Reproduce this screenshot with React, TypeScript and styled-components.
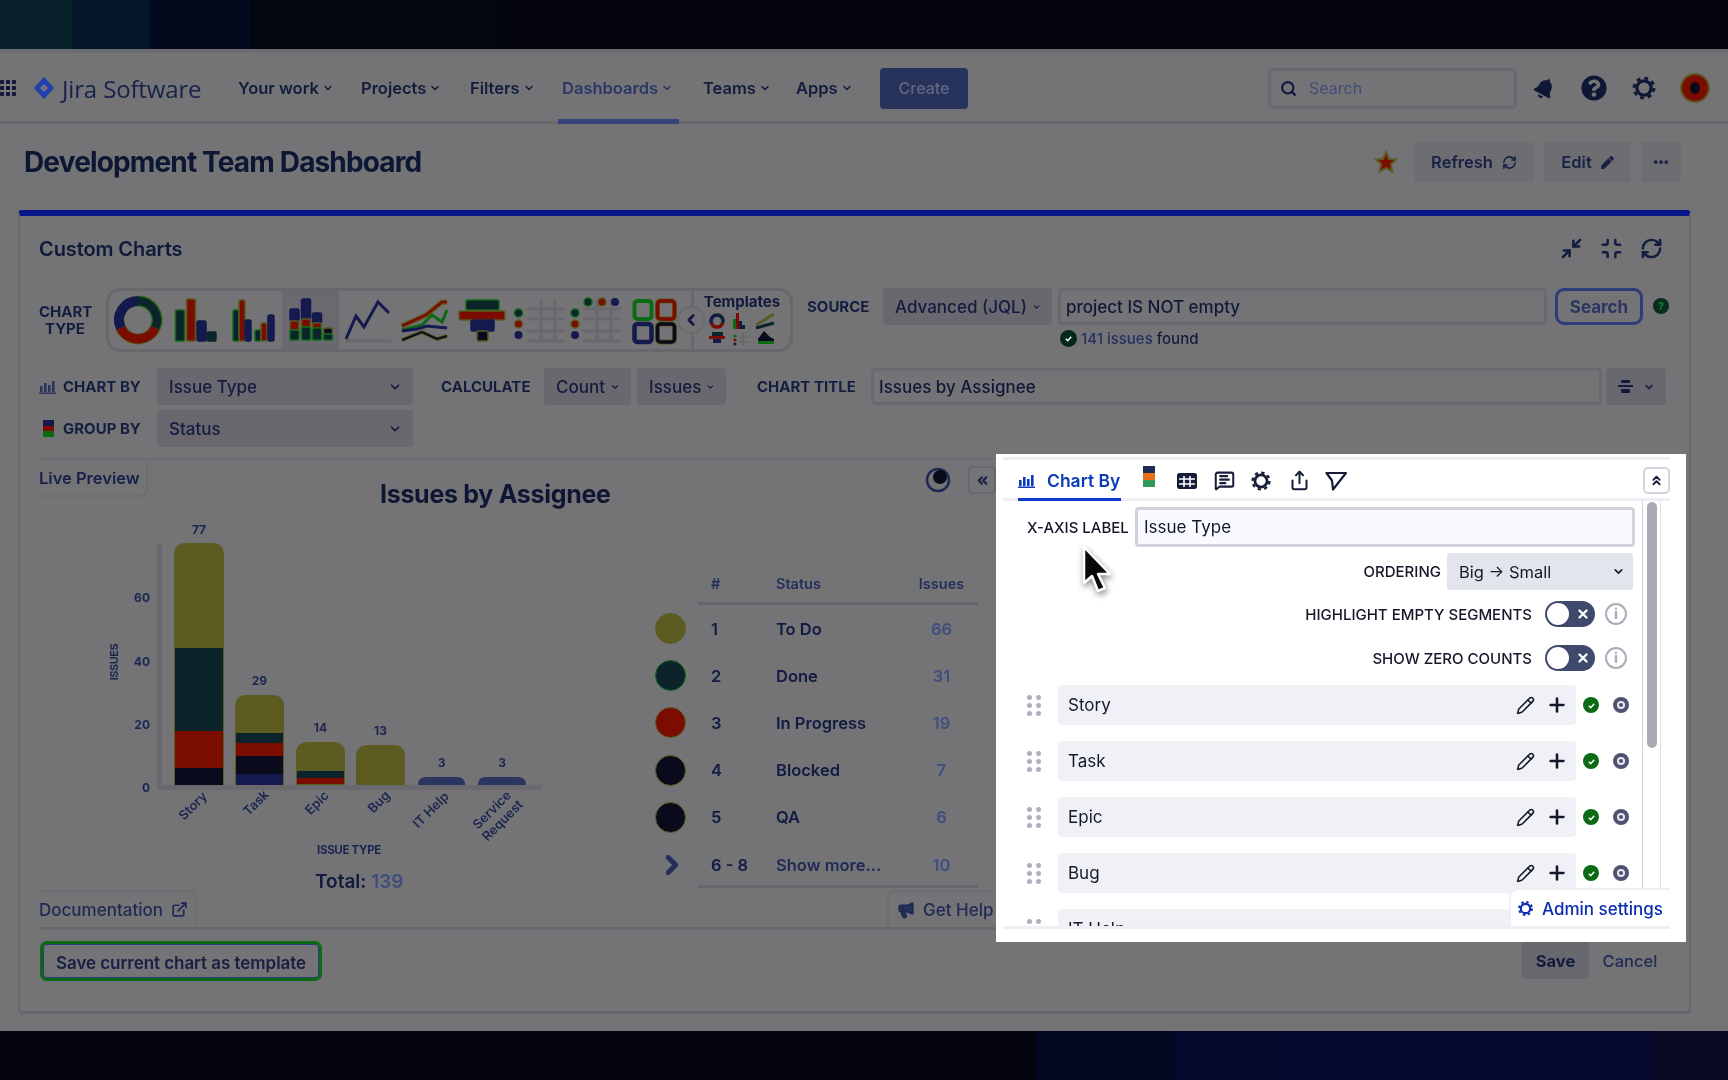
import styled, { createGlobalStyle } from "styled-components";
import {
  ChevronDown,
  ChevronLeft,
  ChevronRight,
  ChevronsLeft,
  ChevronsUp,
  Ellipsis,
  ExternalLink,
  Megaphone,
  Minimize,
  Minimize2,
  MessageSquareText,
  Pencil,
  Plus,
  RefreshCw,
  Search as SearchIcon,
  Share,
  X,
} from "lucide-react";
import { FaBell, FaPen, FaQuestionCircle } from "react-icons/fa";

const RED = "#7a0c00";
const OLIVE = "#5c5b22";
const TEAL = "#0b232b";
const GREEN = "#0b6a12";
const NAVY = "#141a4e";
const INK = "#0a0a1d";

const GlobalStyle = createGlobalStyle`
  html, body { margin: 0; padding: 0; background: #03040f; }
  body { font-family: Inter, "Liberation Sans", sans-serif; color: #121d3d; }
  * { box-sizing: border-box; }
`;

const Page = styled.div`
  position: relative;
  width: 1728px;
  height: 1080px;
  overflow: hidden;
  display: flex;
  flex-direction: column;
`;

const TopBackdrop = styled.div`
  height: 49px;
  background: linear-gradient(90deg, #07202a 0 72px, #06162a 72px 150px, #040a1e 150px 250px, #03060f 250px 500px, #03040f 500px);
`;

const BottomBackdrop = styled.div`
  height: 49px;
  background: linear-gradient(90deg, #04040f 0 1036px, #040820 1036px 1172px, #03092a 1172px 1273px, #03082c 1273px 1654px, #0a0922 1654px);
`;

const Main = styled.div`
  flex: 1;
  background: #747476;
  display: flex;
  flex-direction: column;
  filter: blur(0.45px);
`;

const Header = styled.div`
  height: 75px;
  padding-top: 2px;
  border-top: 4px solid #6b6b70;
  border-bottom: 3px solid #69696d;
  display: flex;
  align-items: center;
  position: relative;
`;

const AppGrid = styled.div`
  width: 16px;
  display: grid;
  grid-template-columns: repeat(3, 4px);
  gap: 2px;
  justify-content: end;
  span { width: 4px; height: 4px; border-radius: 1px; background: #10193a; }
`;

const LogoMark = styled.svg`
  margin-left: 17px;
  width: 22px;
  height: 24px;
`;

const LogoText = styled.span`
  margin-left: 7px;
  width: 176px;
  font-family: "Open Sans", sans-serif;
  font-size: 24px;
  letter-spacing: -0.15px;
  color: #15224a;
`;

const NavItem = styled.div<{ $active?: boolean; $w: number }>`
  width: ${(p) => p.$w}px;
  height: 100%;
  display: flex;
  align-items: center;
  gap: 3px;
  font-size: 16.5px;
  font-weight: 600;
  white-space: nowrap;
  color: ${(p) => (p.$active ? "#2a3768" : "#121d3d")};
  position: relative;
`;

const NavUnderline = styled.div`
  position: absolute;
  left: -4px;
  bottom: -3px;
  width: 121px;
  height: 5px;
  background: #35457a;
`;

const CreateButton = styled.div`
  width: 88px;
  height: 41px;
  border-radius: 4px;
  background: #27335a;
  color: #5f6884;
  font-size: 16px;
  font-weight: 500;
  display: flex;
  align-items: center;
  justify-content: center;
`;

const SearchBox = styled.div`
  margin-left: 300px;
  width: 249px;
  height: 41px;
  border: 3px solid #69696f;
  border-radius: 5px;
  display: flex;
  align-items: center;
  gap: 12px;
  padding-left: 9px;
  font-size: 16px;
  color: #454d7c;
`;

const HeaderIcons = styled.div`
  margin-left: 13px;
  display: flex;
  align-items: center;
  gap: 22px;
`;

const HeaderIconSlot = styled.div`
  width: 28px;
  height: 28px;
  display: flex;
  align-items: center;
  justify-content: center;
`;

const Bell = styled(FaBell)`
  transform: rotate(28deg);
  width: 21px;
  height: 21px;
  color: #0f1736;
`;

const Avatar = styled.div`
  width: 30px;
  height: 30px;
  border-radius: 50%;
  background: ${RED};
  border: 2px solid ${OLIVE};
  display: flex;
  align-items: center;
  justify-content: center;
  &::after {
    content: "";
    width: 10px;
    height: 12px;
    border-radius: 50%;
    background: ${INK};
  }
`;

const TitleBar = styled.div`
  height: 86px;
  padding: 0 47px 10px 24px;
  display: flex;
  align-items: center;
`;

const PageTitle = styled.h1`
  margin: 0;
  flex: 1;
  font-size: 28px;
  font-weight: 700;
  letter-spacing: -0.85px;
  color: #0d1733;
`;

const GhostButton = styled.div<{ $w: number }>`
  width: ${(p) => p.$w}px;
  height: 40px;
  margin-left: 10px;
  border-radius: 4px;
  background: #6e6e72;
  display: flex;
  align-items: center;
  justify-content: center;
  gap: 9px;
  font-size: 16.5px;
  font-weight: 600;
  color: #172146;
`;

const StarWrap = styled.svg`
  width: 24px;
  height: 24px;
  margin-right: 6px;
`;

const Panel = styled.div`
  position: relative;
  margin: 0 37px 0 18px;
  height: 804px;
  border-top: 6px solid #08178a;
  border-left: 2px solid #68686c;
  border-right: 2px solid #68686c;
  border-bottom: 3px solid #66666c;
  border-radius: 4px;
  padding: 0 27px 0 19px;
`;

const PanelHead = styled.div`
  height: 64px;
  display: flex;
  align-items: center;
  justify-content: space-between;
`;

const PanelTitle = styled.div`
  margin-top: 1px;
  font-size: 20px;
  font-weight: 600;
  letter-spacing: -0.1px;
  color: #0f1a3a;
`;

const PanelTools = styled.div`
  display: flex;
  gap: 17px;
  margin-right: -1px;
  color: #131d40;
`;

const BuilderRow = styled.div<{ $top: number; $h: number }>`
  margin-top: ${(p) => p.$top}px;
  height: ${(p) => p.$h}px;
  display: flex;
  align-items: flex-start;
  & > * { flex: none; }
`;

const ChartTypeLabel = styled.div`
  width: 52px;
  margin: 15px 15px 0 0;
  text-align: center;
  font-size: 15px;
  line-height: 17px;
  font-weight: 700;
  color: #131d40;
`;

const Picker = styled.div`
  position: relative;
  width: 687px;
  height: 64px;
  border: 3px solid #68686c;
  border-radius: 14px;
  display: flex;
  overflow: visible;
`;

const PickerCell = styled.div<{ $active?: boolean }>`
  width: 57.5px;
  height: 100%;
  flex: none;
  background: ${(p) => (p.$active ? "#69696f" : "transparent")};
  svg { display: block; }
`;

const PickerBack = styled.div`
  position: absolute;
  left: 568px;
  top: 15px;
  width: 28px;
  height: 28px;
  border-radius: 50%;
  background: #747476;
  border: 2px solid #6c6c70;
  display: flex;
  align-items: center;
  justify-content: center;
  color: #101a3c;
`;

const TemplatesCell = styled.div`
  margin-left: 7px;
  flex: 1;
  border-left: 3px solid #68686c;
  padding-top: 2px;
  text-align: center;
  font-size: 15px;
  line-height: 18px;
  font-weight: 700;
  color: #101a3c;
  svg { display: block; margin: 0 auto; }
`;

const FieldLabel = styled.div<{ $w: number; $ml?: number }>`
  width: ${(p) => p.$w}px;
  margin-left: ${(p) => p.$ml ?? 0}px;
  height: 37px;
  display: flex;
  align-items: center;
  gap: 7px;
  font-size: 15px;
  font-weight: 700;
  white-space: nowrap;
  color: #141e41;
`;

const Select = styled.div<{ $w: number; $ml?: number; $spread?: boolean }>`
  width: ${(p) => p.$w}px;
  margin-left: ${(p) => p.$ml ?? 0}px;
  height: 37px;
  border-radius: 4px;
  background: #68686e;
  padding: 0 11px 0 12px;
  display: flex;
  align-items: center;
  justify-content: ${(p) => (p.$spread ? "space-between" : "flex-start")};
  gap: 5px;
  font-size: 17px;
  font-weight: 500;
  white-space: nowrap;
  color: #141b40;
`;

const SourceColumn = styled.div`
  margin-left: 6px;
  width: 489px;
`;

const TextInput = styled.div<{ $w?: number }>`
  width: ${(p) => (p.$w ? `${p.$w}px` : "100%")};
  height: 37px;
  border: 3px solid #69696e;
  border-radius: 4px;
  padding-left: 5px;
  display: flex;
  align-items: center;
  font-size: 17px;
  font-weight: 500;
  color: #0f1838;
`;

const FoundLine = styled.div`
  margin-top: 4px;
  padding-left: 2px;
  display: flex;
  align-items: center;
  gap: 4px;
  font-size: 15px;
  font-weight: 500;
  color: #121d3d;
  b { font-weight: 500; color: #253160; }
`;

const CheckDot = styled.span<{ $d: number; $bg: string }>`
  width: ${(p) => p.$d}px;
  height: ${(p) => p.$d}px;
  border-radius: 50%;
  flex: none;
  background: ${(p) => p.$bg};
  display: inline-flex;
  align-items: center;
  justify-content: center;
`;

const SearchButton = styled.div`
  margin-left: 8px;
  width: 88px;
  height: 37px;
  border: 3px solid #2e3d7a;
  border-radius: 9px;
  display: flex;
  align-items: center;
  justify-content: center;
  font-size: 17px;
  font-weight: 700;
  color: #2a3560;
`;

const HelpDot = styled.div`
  margin: 10px 0 0 10px;
  width: 16px;
  height: 16px;
  border-radius: 50%;
  background: #0a2a1e;
  color: #0f7a2a;
  font-size: 11px;
  font-weight: 800;
  line-height: 16px;
  text-align: center;
`;

const GroupColumn = styled.div`
  display: flex;
  flex-direction: column;
  gap: 5px;
`;

const GroupRow = styled.div`
  display: flex;
`;

const AlignButton = styled.div`
  margin-left: 4px;
  width: 60px;
  height: 37px;
  border-radius: 4px;
  background: #68686e;
  display: flex;
  align-items: center;
  justify-content: center;
  gap: 10px;
  color: #101a3c;
`;

const Preview = styled.div`
  margin-top: 11px;
  border-top: 2px solid #6c6c70;
  display: flex;
  flex-direction: column;
`;

const PreviewTop = styled.div`
  height: 55px;
  display: flex;
  align-items: flex-start;
`;

const PreviewTab = styled.div`
  width: 109px;
  height: 37px;
  border-right: 2px solid #6e6e72;
  border-bottom: 2px solid #6e6e72;
  border-bottom-right-radius: 8px;
  display: flex;
  align-items: center;
  font-size: 16.5px;
  font-weight: 600;
  color: #16204a;
`;

const ChartHeading = styled.div`
  margin: 19px 0 0 232px;
  width: 500px;
  font-size: 25px;
  line-height: 30px;
  font-weight: 700;
  letter-spacing: -0.3px;
  color: #0d1733;
`;

const MoonIcon = styled.svg`
  margin: 7px 0 0 45px;
  width: 26px;
  height: 26px;
`;

const CollapseLeft = styled.div`
  margin: 6px 0 0 17px;
  width: 28px;
  height: 28px;
  border: 2px solid #68686e;
  border-radius: 5px;
  display: flex;
  align-items: center;
  justify-content: center;
  color: #1a2448;
`;

const PreviewBody = styled.div`
  height: 375px;
  display: flex;
`;

const ChartColumn = styled.div`
  width: 611px;
  padding-left: 60px;
`;

const ChartSvg = styled.svg`
  display: block;
  text { font-family: Inter, "Liberation Sans", sans-serif; }
`;

const TotalLine = styled.div`
  margin: 10px 0 0 216px;
  font-size: 19px;
  font-weight: 600;
  color: #101a3c;
  b { font-weight: 600; color: #3f4e7e; }
`;

const Table = styled.div`
  margin-top: 49px;
  width: 328px;
  height: 324px;
  display: grid;
  grid-template-columns: 48px 78px 129px 73px;
  grid-template-rows: 41px;
  grid-auto-rows: 47.2px;
  font-size: 16.5px;
  font-weight: 600;
  color: #121b42;
`;

const TableHead = styled.div`
  grid-column: 1 / -1;
  height: 41px;
  margin-left: 48px;
  border-bottom: 3px solid #66666c;
  display: grid;
  grid-template-columns: 78px 129px 73px;
  align-items: center;
  font-size: 14.5px;
  color: #242f5a;
`;

const NumCell = styled.div`
  padding-left: 13px;
  display: flex;
  align-items: center;
`;

const NameCell = styled.div`
  display: flex;
  align-items: center;
  white-space: nowrap;
`;

const CountCell = styled.div`
  display: flex;
  align-items: center;
  justify-content: center;
  color: #3f4e7e;
`;

const IssuesHead = styled(CountCell)`
  color: #242f5a;
`;

const ShowMore = styled(NameCell)`
  color: #1f2a54;
`;

const SwatchCell = styled.div`
  display: flex;
  align-items: center;
  padding-left: 5px;
  color: #242f5a;
`;

const MoreChevron = styled(ChevronRight)`
  margin-left: 2px;
`;

const Swatch = styled.span<{ $fill: string; $ring: string }>`
  width: 31px;
  height: 31px;
  border-radius: 50%;
  background: ${(p) => p.$fill};
  border: 1.5px solid ${(p) => p.$ring};
`;

const TableEnd = styled.div`
  grid-column: 1 / -1;
  height: 3px;
  margin: -3px 0 0 48px;
  background: #66666c;
`;

const BottomTabs = styled.div`
  height: 40px;
  border-bottom: 3px solid #68686c;
  display: flex;
  justify-content: space-between;
`;

const BottomTab = styled.div<{ $left?: boolean }>`
  height: 100%;
  width: ${(p) => (p.$left ? 158 : 775)}px;
  padding-left: ${(p) => (p.$left ? 0 : 8)}px;
  border-right: ${(p) => (p.$left ? "2px solid #6e6e72" : "none")};
  border-left: ${(p) => (p.$left ? "none" : "2px solid #6e6e72")};
  border-top: 2px solid #6e6e72;
  border-top-right-radius: ${(p) => (p.$left ? 8 : 0)}px;
  border-top-left-radius: ${(p) => (p.$left ? 0 : 8)}px;
  display: flex;
  align-items: center;
  gap: 8px;
  font-size: 17px;
  font-weight: 500;
  color: #1f2a54;
`;

const Footer = styled.div`
  margin-top: 11px;
  display: flex;
  align-items: flex-start;
`;

const TemplateButton = styled.div`
  margin-left: 1px;
  width: 282px;
  height: 40px;
  padding-top: 3px;
  border: 3px solid ${GREEN};
  box-shadow: inset 0 0 0 1px #2a3a7a;
  border-radius: 7px;
  display: flex;
  align-items: center;
  justify-content: center;
  font-size: 17px;
  font-weight: 600;
  letter-spacing: -0.05px;
  color: #181f45;
`;

const SaveButton = styled.div`
  margin-left: auto;
  width: 67px;
  height: 38px;
  padding-top: 1px;
  border-radius: 4px;
  background: #68686f;
  display: flex;
  align-items: center;
  justify-content: center;
  font-size: 16.5px;
  font-weight: 700;
  color: #121a3c;
`;

const CancelButton = styled.div`
  margin: 0 3px 0 12px;
  width: 58px;
  height: 38px;
  padding-top: 1px;
  display: flex;
  align-items: center;
  justify-content: center;
  font-size: 16.5px;
  font-weight: 500;
  color: #202b52;
`;

/* the white options popup that lies over the dimmed page */
const Popup = styled.div`
  position: absolute;
  left: 976px;
  top: 238px;
  width: 690px;
  height: 488px;
  background: #fff;
  padding: 3px 16px 13px 7px;
  color: #16182a;
`;

const PopupInner = styled.div`
  position: relative;
  height: 100%;
  border-top: 3px solid #eeeef4;
  border-bottom: 3px solid #eeeef4;
  display: flex;
  flex-direction: column;
`;

const TabBar = styled.div`
  height: 41px;
  flex: none;
  border-bottom: 3px solid #eeeef4;
  display: flex;
  align-items: center;
  padding: 3px 0 0 15px;
  color: #161d38;
`;

const ActiveTab = styled.div`
  width: 103px;
  height: 41px;
  margin: -3px 0 -3px;
  padding-top: 3px;
  border-bottom: 3px solid #0b3bc4;
  display: flex;
  align-items: center;
  gap: 12px;
  font-size: 17.5px;
  font-weight: 600;
  white-space: nowrap;
  color: #0b3bb8;
`;

const TabIcon = styled.div<{ $ml: number }>`
  margin-left: ${(p) => p.$ml}px;
  width: 24px;
  height: 24px;
  display: flex;
  align-items: center;
  justify-content: center;
`;

const StackIcon = styled.div`
  margin-left: 22px;
  margin-top: -8px;
  width: 12px;
  height: 21px;
  background: linear-gradient(#1d2d58 0 7px, #e8701a 7px 14px, #2f9a58 14px);
`;

const PopupCollapse = styled.div`
  position: absolute;
  right: 0;
  top: 7px;
  width: 27px;
  height: 27px;
  border: 2px solid #d3d6df;
  border-radius: 5px;
  display: flex;
  align-items: center;
  justify-content: center;
  color: #1a1f38;
`;

const PopupBody = styled.div`
  flex: 1;
  min-height: 0;
  overflow: hidden;
  display: flex;
`;

const PopupContent = styled.div`
  width: 640px;
  padding: 6px 7px 0 24px;
  border-right: 1px solid #cfd2dc;
`;

const ScrollArea = styled.div`
  width: 18px;
  padding: 1px 0 0 4px;
  border-right: 1px solid #dfe1e8;
`;

const ScrollThumb = styled.div`
  width: 10px;
  height: 246px;
  border-radius: 5px;
  background: #a9aab2;
`;

const AxisRow = styled.div`
  display: flex;
  align-items: center;
  justify-content: space-between;
`;

const OptionLabel = styled.span`
  font-size: 15px;
  font-weight: 500;
  white-space: nowrap;
`;

const AxisInput = styled.div`
  width: 500px;
  height: 40px;
  border: 3px solid #d0d3dc;
  border-radius: 4px;
  background: #f8faff;
  padding-left: 6px;
  display: flex;
  align-items: center;
  font-size: 17px;
`;

const OptionRow = styled.div<{ $top: number }>`
  margin-top: ${(p) => p.$top}px;
  display: flex;
  align-items: center;
  justify-content: flex-end;
`;

const OrderSelect = styled.div`
  margin: 0 2px 0 6px;
  width: 186px;
  height: 37px;
  background: #e3e5ec;
  border-radius: 3px;
  padding: 0 8px 0 12px;
  display: flex;
  align-items: center;
  justify-content: space-between;
  font-size: 16.5px;
`;

const Toggle = styled.div`
  margin-left: 13px;
  width: 50px;
  height: 26px;
  border-radius: 13px;
  background: #3e4a6b;
  padding: 2px 5px 2px 2px;
  display: flex;
  align-items: center;
  justify-content: space-between;
  color: #fff;
  &::before {
    content: "";
    width: 22px;
    height: 22px;
    border-radius: 50%;
    background: #fff;
  }
`;

const InfoDot = styled.div`
  margin: 0 8px 0 10px;
  width: 22px;
  height: 22px;
  border-radius: 50%;
  border: 2px solid #a9adb8;
  color: #a9adb8;
  font-size: 14px;
  font-weight: 800;
  line-height: 18px;
  text-align: center;
`;

const ItemRow = styled.div<{ $top: number }>`
  margin: ${(p) => p.$top}px 0 0 -24px;
  height: 40px;
  display: flex;
  align-items: center;
`;

const DragHandle = styled.div`
  margin-left: 23px;
  width: 32px;
  display: grid;
  grid-template-columns: repeat(2, 5px);
  gap: 3px 4px;
  justify-content: start;
  padding-left: 1px;
  span { width: 5px; height: 5px; border-radius: 50%; background: #aeb1bd; }
`;

const ItemBox = styled.div`
  width: 518px;
  height: 100%;
  flex: none;
  border-radius: 4px;
  background: #eff1f6;
  padding: 0 8px 0 10px;
  display: flex;
  align-items: center;
  gap: 11px;
  font-size: 17px;
  color: #16182a;
  span { margin-right: auto; }
`;

const ItemActions = styled.div`
  margin-left: 7px;
  width: 46px;
  display: flex;
  align-items: center;
  justify-content: space-between;
`;

const EyeDot = styled.span`
  width: 16px;
  height: 16px;
  border-radius: 50%;
  background: #4d5470;
  display: inline-flex;
  align-items: center;
  justify-content: center;
  &::after {
    content: "";
    width: 4px;
    height: 4px;
    border-radius: 50%;
    background: #4d5470;
    box-shadow: 0 0 0 2px #e8e9ef;
  }
`;

const AdminBadge = styled.div`
  position: absolute;
  right: 0;
  bottom: 0;
  width: 161px;
  height: 38px;
  padding: 1px 0 0 6px;
  background: #fff;
  border-top: 2px solid #eeeef4;
  border-left: 2px solid #eeeef4;
  border-top-left-radius: 8px;
  display: flex;
  align-items: center;
  gap: 8px;
  font-size: 17px;
  font-weight: 500;
  white-space: nowrap;
  color: #0b2bb0;
`;

/* the mouse pointer captured in the screenshot */
const Cursor = styled.svg`
  position: absolute;
  left: 1078px;
  top: 544px;
  width: 38px;
  height: 52px;
  filter: drop-shadow(1px 3px 3px rgba(0, 0, 0, 0.45));
`;

const GroupGlyph = styled.svg`
  margin: 0 2px 0 4px;
  width: 11px;
  height: 17px;
`;

const Gear = ({ size = 24, color = "currentColor" }: { size?: number; color?: string }) => (
  <svg width={size} height={size} viewBox="0 0 24 24" fill="none" stroke={color}>
    <circle cx="12" cy="12" r="6.6" strokeWidth="3" />
    <circle cx="12" cy="12" r="9.2" strokeWidth="2.6" strokeDasharray="3.6 3.62" />
  </svg>
);

const BarsGlyph = ({ color }: { color: string }) => (
  <svg width="17" height="14" viewBox="0 0 17 14" fill={color}>
    <rect x="1" y="6" width="2.6" height="6" />
    <rect x="5" y="3" width="2.6" height="9" />
    <rect x="9" y="5" width="2.6" height="7" />
    <rect x="13" y="1" width="2.6" height="11" />
    <rect x="0" y="12.5" width="17" height="1.5" />
  </svg>
);

const polar = (cx: number, cy: number, r: number, deg: number) => {
  const a = ((deg - 90) * Math.PI) / 180;
  return `${(cx + r * Math.cos(a)).toFixed(1)} ${(cy + r * Math.sin(a)).toFixed(1)}`;
};

const arc = (cx: number, cy: number, r: number, from: number, to: number) =>
  `M${polar(cx, cy, r, from)} A${r} ${r} 0 ${to - from > 180 ? 1 : 0} 1 ${polar(cx, cy, r, to)}`;

const Icon58 = ({ children }: { children: React.ReactNode }) => (
  <svg width="57.5" height="58" viewBox="0 0 57.5 58" fill="none">
    {children}
  </svg>
);

// outlined rect, the way the reference's posterised chart thumbnails look
const Block = ({ x, y, w, h, fill, line }: { x: number; y: number; w: number; h: number; fill: string; line: string }) => (
  <rect x={x} y={y} width={w} height={h} rx="1.5" fill={fill} stroke={line} strokeWidth="1.5" />
);

const Dots = ({ left }: { left: number }) => (
  <>
    <circle cx={left} cy="22" r="4" fill={TEAL} stroke={GREEN} strokeWidth="1.5" />
    <circle cx={left} cy="33" r="4" fill={RED} stroke={OLIVE} strokeWidth="1.5" />
    <circle cx={left} cy="44" r="4" fill={NAVY} />
  </>
);

const HeatLines = ({ x0, x1 }: { x0: number; x1: number }) => (
  <g stroke="#68686e" strokeWidth="3">
    <path d={`M${x0} 18H${x1}M${x0} 28H${x1}M${x0} 40H${x1}M${x0} 50H${x1}`} />
    <path d={`M${x0 + 14} 8V50M${x0 + 28} 8V50`} />
  </g>
);

const chartTypes = [
  <Icon58 key="donut">
    <path d={arc(29, 29, 19, 0, 115)} stroke={OLIVE} strokeWidth="11" />
    <path d={arc(29, 29, 19, 0, 115)} stroke={GREEN} strokeWidth="10" />
    <path d={arc(29, 29, 19, 0, 115)} stroke={TEAL} strokeWidth="8" />
    <path d={arc(29, 29, 19, 115, 245)} stroke={OLIVE} strokeWidth="11" />
    <path d={arc(29, 29, 19, 115, 245)} stroke={RED} strokeWidth="9" />
    <path d={arc(29, 29, 19, 245, 360)} stroke={NAVY} strokeWidth="10" />
  </Icon58>,
  <Icon58 key="bars">
    <Block x={8.5} y={19} w={9} h={31} fill={TEAL} line={GREEN} />
    <Block x={19.5} y={8} w={9} h={42} fill={RED} line={OLIVE} />
    <Block x={30} y={30} w={9} h={20} fill={NAVY} line={NAVY} />
    <Block x={40} y={41} w={9} h={9} fill={TEAL} line={TEAL} />
  </Icon58>,
  <Icon58 key="grouped">
    <Block x={9} y={19} w={6} h={31} fill={TEAL} line={GREEN} />
    <Block x={15} y={9} w={6} h={41} fill={RED} line={OLIVE} />
    <Block x={21} y={29} w={6} h={21} fill={NAVY} line={NAVY} />
    <Block x={31} y={39} w={6} h={11} fill={TEAL} line={GREEN} />
    <Block x={37} y={32} w={6} h={18} fill={RED} line={OLIVE} />
    <Block x={44} y={24} w={6} h={26} fill={NAVY} line={NAVY} />
  </Icon58>,
  <Icon58 key="stacked">
    <Block x={8} y={18} w={9} h={12} fill={NAVY} line={NAVY} />
    <Block x={8} y={30} w={9} h={9} fill={RED} line={OLIVE} />
    <Block x={8} y={39} w={9} h={10} fill={TEAL} line={GREEN} />
    <Block x={19.5} y={8} w={9} h={20} fill={NAVY} line={NAVY} />
    <Block x={19.5} y={28} w={9} h={8} fill={RED} line={OLIVE} />
    <Block x={19.5} y={36} w={9} h={13} fill={TEAL} line={GREEN} />
    <Block x={30.5} y={22} w={9} h={10} fill={NAVY} line={NAVY} />
    <Block x={30.5} y={32} w={9} h={5} fill={RED} line={OLIVE} />
    <Block x={30.5} y={37} w={9} h={12} fill={TEAL} line={GREEN} />
    <Block x={41.5} y={37} w={9} h={6} fill={INK} line={OLIVE} />
    <Block x={41.5} y={43} w={9} h={6} fill={TEAL} line={GREEN} />
  </Icon58>,
  <Icon58 key="line">
    <path d="M7 50H52" stroke="#68686e" strokeWidth="3" />
    <path d="M7 48L17 25L25 36L39 11L50 22" stroke={NAVY} strokeWidth="3" />
  </Icon58>,
  <Icon58 key="lines">
    <path d="M5 35L29 24L45 11H50" stroke={OLIVE} strokeWidth="5" />
    <path d="M5 35L29 24L45 11H50" stroke={RED} strokeWidth="2.5" />
    <path d="M5 39L25 34L35 24L45 31L50 19" stroke={GREEN} strokeWidth="3" />
    <path d="M5 40L20 38L30 35L50 37" stroke={NAVY} strokeWidth="3" />
    <path d="M5 49L25 41L40 48L50 45" stroke={OLIVE} strokeWidth="4" />
    <path d="M5 49L25 41L40 48L50 45" stroke={INK} strokeWidth="2" />
  </Icon58>,
  <Icon58 key="funnel">
    <Block x={12} y={9} w={33} h={10} fill={TEAL} line={GREEN} />
    <Block x={5} y={20} w={46} h={9} fill={RED} line={OLIVE} />
    <Block x={17} y={29} w={23} h={11} fill={NAVY} line={NAVY} />
    <Block x={23} y={40} w={11} h={10} fill={INK} line={OLIVE} />
  </Icon58>,
  <Icon58 key="heat">
    <HeatLines x0={15} x1={52} />
    <Dots left={6.5} />
  </Icon58>,
  <Icon58 key="heat2">
    <HeatLines x0={14} x1={52} />
    <Dots left={6} />
    <circle cx="19" cy="11" r="4" fill={TEAL} stroke={GREEN} strokeWidth="1.5" />
    <circle cx="33" cy="11" r="4" fill={RED} stroke={OLIVE} strokeWidth="1.5" />
    <circle cx="46" cy="11" r="4" fill={NAVY} />
  </Icon58>,
  <Icon58 key="small-multiples">
    <rect x="7.5" y="10" width="17" height="18" rx="3" stroke={GREEN} strokeWidth="4" />
    <rect x="30.5" y="10" width="17" height="18" rx="3" stroke={OLIVE} strokeWidth="5" />
    <rect x="30.5" y="10" width="17" height="18" rx="3" stroke={RED} strokeWidth="3.5" />
    <rect x="7.5" y="33" width="17" height="18" rx="3" stroke={NAVY} strokeWidth="4.5" />
    <rect x="30.5" y="33" width="17" height="18" rx="3" stroke={OLIVE} strokeWidth="5" />
    <rect x="30.5" y="33" width="17" height="18" rx="3" stroke={INK} strokeWidth="3.5" />
  </Icon58>,
];

const TemplateThumbs = () => (
  <svg width="72" height="36" viewBox="0 0 72 36" fill="none">
    <path d={arc(11, 10, 6, 0, 110)} stroke={TEAL} strokeWidth="3.5" />
    <path d={arc(11, 10, 6, 110, 250)} stroke={RED} strokeWidth="3.5" />
    <path d={arc(11, 10, 6, 250, 360)} stroke={NAVY} strokeWidth="3.5" />
    <rect x="27" y="8" width="3" height="10" fill={GREEN} />
    <rect x="30" y="2" width="3" height="16" fill={RED} />
    <rect x="33" y="10" width="3" height="8" fill={NAVY} />
    <rect x="36" y="14" width="3" height="4" fill={TEAL} />
    <path d="M50 14L68 3" stroke={OLIVE} strokeWidth="3" />
    <path d="M50 17L68 12" stroke={TEAL} strokeWidth="3" />
    <rect x="6" y="21" width="11" height="4" fill={TEAL} />
    <rect x="3" y="25" width="16" height="3" fill={RED} />
    <rect x="7" y="28" width="8" height="4" fill={NAVY} />
    <circle cx="29" cy="25" r="1.6" fill={GREEN} />
    <circle cx="29" cy="29" r="1.6" fill={RED} />
    <circle cx="29" cy="33" r="1.6" fill={NAVY} />
    <path d="M33 26H43M33 31H43M37 22V34" stroke="#68686e" strokeWidth="1.5" />
    <path d="M52 28L58 20L64 26L68 28V33H52Z" fill={INK} />
    <rect x="52" y="30" width="16" height="3" fill={GREEN} />
  </svg>
);

const topPath = (x: number, y: number, w: number, h: number, r: number) =>
  `M${x} ${y + h}V${y + r}Q${x} ${y} ${x + r} ${y}H${x + w - r}Q${x + w} ${y} ${x + w} ${y + r}V${y + h}Z`;

const bars = [
  {
    x: 174, w: 50, total: "77", labelY: 534,
    segs: [[543, 648, OLIVE], [648, 731, TEAL], [731, 768, RED], [768, 785, INK]],
  },
  {
    x: 235, w: 49, total: "29", labelY: 685,
    segs: [[695, 733, OLIVE], [733, 743, TEAL], [743, 756, RED], [756, 774, INK], [774, 785, NAVY]],
  },
  {
    x: 296, w: 49, total: "14", labelY: 732,
    segs: [[742, 771, OLIVE], [771, 778, TEAL], [778, 784, RED]],
  },
  { x: 356, w: 49, total: "13", labelY: 735, segs: [[745, 785, OLIVE]] },
  { x: 418, w: 47, total: "3", labelY: 767, segs: [[777, 785, "#2a3560"]] },
  { x: 478, w: 48, total: "3", labelY: 767, segs: [[777, 785, "#2a3560"]] },
] as { x: number; w: number; total: string; labelY: number; segs: [number, number, string][] }[];

const ticks = [
  { label: "60", y: 602 },
  { label: "40", y: 666 },
  { label: "20", y: 729 },
  { label: "0", y: 792 },
];

const xLabels = [
  { lines: ["Story"], x: 196, y: 809 },
  { lines: ["Task"], x: 259, y: 806 },
  { lines: ["Epic"], x: 320, y: 806 },
  { lines: ["Bug"], x: 382, y: 805 },
  { lines: ["IT Help"], x: 434, y: 813 },
  { lines: ["Service", "Request"], x: 495, y: 813 },
];

const StackedBars = () => (
  <ChartSvg width="460" height="345" viewBox="99 515 460 345">
    <rect x="157" y="543" width="5" height="247" fill="#69696e" />
    <rect x="157" y="785" width="385" height="5" fill="#69696e" />
    {ticks.map((t) => (
      <text key={t.label} x="150" y={t.y} textAnchor="end" fontSize="12" fontWeight="700" fill="#1b2650">
        {t.label}
      </text>
    ))}
    <text
      x="122"
      y="666"
      transform="rotate(-90 118 666)"
      textAnchor="middle"
      fontSize="11"
      fontWeight="700"
      letterSpacing="-0.5"
      fill="#1b2650"
    >
      ISSUES
    </text>
    {bars.map((b) => (
      <g key={b.x}>
        {/* olive base shows under the stacked parts, like the reference */}
        <path d={topPath(b.x, b.segs[0][0], b.w, 785 - b.segs[0][0], Math.min(12, 785 - b.segs[0][0]))} fill={b.segs[0][2]} />
        {b.segs.slice(1).map(([from, to, color]) => (
          <rect key={from} x={b.x + 1} y={from} width={b.w - 2} height={to - from} fill={color} />
        ))}
        <text x={b.x + b.w / 2} y={b.labelY} textAnchor="middle" fontSize="12" fontWeight="700" fill="#1b2650">
          {b.total}
        </text>
      </g>
    ))}
    {xLabels.map((l) => (
      <text
        key={l.x}
        transform={`rotate(-45 ${l.x} ${l.y})`}
        x={l.x}
        y={l.y}
        textAnchor="middle"
        fontSize="13"
        fontWeight="600"
        fill="#1b2650"
      >
        {l.lines.map((line, i) => (
          <tspan key={line} x={l.x} dy={i ? 15 : 0}>
            {line}
          </tspan>
        ))}
      </text>
    ))}
    <text x="349" y="854" textAnchor="middle" fontSize="11.5" fontWeight="700" letterSpacing="-0.3" fill="#1b2650">
      ISSUE TYPE
    </text>
  </ChartSvg>
);

const statusRows = [
  { n: "1", name: "To Do", count: "66", fill: OLIVE, ring: OLIVE },
  { n: "2", name: "Done", count: "31", fill: TEAL, ring: GREEN },
  { n: "3", name: "In Progress", count: "19", fill: RED, ring: OLIVE },
  { n: "4", name: "Blocked", count: "7", fill: INK, ring: OLIVE },
  { n: "5", name: "QA", count: "6", fill: INK, ring: OLIVE },
];

const navItems = [
  { label: "Your work", w: 123 },
  { label: "Projects", w: 109 },
  { label: "Filters", w: 92 },
  { label: "Dashboards", w: 141, active: true },
  { label: "Teams", w: 93 },
  { label: "Apps", w: 84 },
];

const itemNames = ["Story", "Task", "Epic", "Bug", "IT Help"];

const WhiteCheck = () => (
  <svg width="9" height="9" viewBox="0 0 10 10" fill="none" stroke="#fff" strokeWidth="1.6">
    <path d="M2 5.2L4.2 7.4L8 3" />
  </svg>
);

const StackIconDim = () => (
  <GroupGlyph viewBox="0 0 11 17">
    <rect width="11" height="6" fill={NAVY} />
    <rect y="6" width="11" height="5" fill={RED} />
    <rect y="11" width="11" height="6" fill={GREEN} />
  </GroupGlyph>
);

const TableRow = ({ n, name, count, fill, ring }: { n: string; name: string; count: string; fill: string; ring: string }) => (
  <>
    <SwatchCell>
      <Swatch $fill={fill} $ring={ring} />
    </SwatchCell>
    <NumCell>{n}</NumCell>
    <NameCell>{name}</NameCell>
    <CountCell>{count}</CountCell>
  </>
);

const App = () => {
  return (
    <Page>
      <GlobalStyle />
      <TopBackdrop />
      <Main>
        <Header>
          <AppGrid>
            {Array.from({ length: 9 }).map((_, i) => (
              <span key={i} />
            ))}
          </AppGrid>
          <LogoMark viewBox="0 0 22 24">
            <path d="M11 1L21 12L11 23L1 12Z" fill="#1f3fb0" />
            <path d="M11 8L15 12L11 16L7 12Z" fill="#747476" />
          </LogoMark>
          <LogoText>Jira Software</LogoText>
          {navItems.map((item) => (
            <NavItem key={item.label} $w={item.w} $active={item.active}>
              {item.label}
              <ChevronDown size={12} strokeWidth={3} />
              {item.active && <NavUnderline />}
            </NavItem>
          ))}
          <CreateButton>Create</CreateButton>
          <SearchBox>
            <SearchIcon size={17} strokeWidth={3} color="#101a3c" />
            Search
          </SearchBox>
          <HeaderIcons>
            <HeaderIconSlot>
              <Bell />
            </HeaderIconSlot>
            <HeaderIconSlot>
              <FaQuestionCircle size={26} color="#0f1736" />
            </HeaderIconSlot>
            <HeaderIconSlot>
              <Gear size={26} color="#0f1736" />
            </HeaderIconSlot>
            <Avatar />
          </HeaderIcons>
        </Header>
        <TitleBar>
          <PageTitle>Development Team Dashboard</PageTitle>
          <StarWrap viewBox="0 0 24 24">
            <path
              d="M12 2L15 9L22 9.6L16.8 14.4L18.4 21.6L12 17.8L5.6 21.6L7.2 14.4L2 9.6L9 9Z"
              fill={RED}
              stroke={OLIVE}
              strokeWidth="2"
            />
          </StarWrap>
          <GhostButton $w={120}>
            Refresh <RefreshCw size={15} strokeWidth={2.5} />
          </GhostButton>
          <GhostButton $w={87}>
            Edit <FaPen size={13} />
          </GhostButton>
          <GhostButton $w={40}>
            <Ellipsis size={18} strokeWidth={3} />
          </GhostButton>
        </TitleBar>
        <Panel>
          <PanelHead>
            <PanelTitle>Custom Charts</PanelTitle>
            <PanelTools>
              <Minimize2 size={23} strokeWidth={2.6} />
              <Minimize size={23} strokeWidth={2.6} />
              <RefreshCw size={23} strokeWidth={2.6} />
            </PanelTools>
          </PanelHead>
          <BuilderRow $top={8} $h={64}>
            <ChartTypeLabel>
              CHART
              <br />
              TYPE
            </ChartTypeLabel>
            <Picker>
              {chartTypes.map((icon, i) => (
                <PickerCell key={i} $active={i === 3}>
                  {icon}
                </PickerCell>
              ))}
              <TemplatesCell>
                Templates
                <TemplateThumbs />
              </TemplatesCell>
              <PickerBack>
                <ChevronLeft size={18} strokeWidth={3.5} />
              </PickerBack>
            </Picker>
            <FieldLabel $w={76} $ml={14}>
              SOURCE
            </FieldLabel>
            <Select $w={169}>
              Advanced (JQL)
              <ChevronDown size={12} strokeWidth={3} />
            </Select>
            <SourceColumn>
              <TextInput>project IS NOT empty</TextInput>
              <FoundLine>
                <CheckDot $d={17} $bg="#06281c">
                  <WhiteCheck />
                </CheckDot>
                <b>141 issues</b> found
              </FoundLine>
            </SourceColumn>
            <SearchButton>Search</SearchButton>
            <HelpDot>?</HelpDot>
          </BuilderRow>
          <BuilderRow $top={16} $h={79}>
            <GroupColumn>
              <GroupRow>
                <FieldLabel $w={118}>
                  <BarsGlyph color="#2a3560" />
                  CHART BY
                </FieldLabel>
                <Select $w={256} $spread>
                  Issue Type
                  <ChevronDown size={14} strokeWidth={3} />
                </Select>
              </GroupRow>
              <GroupRow>
                <FieldLabel $w={118}>
                  <StackIconDim />
                  GROUP BY
                </FieldLabel>
                <Select $w={256} $spread>
                  Status
                  <ChevronDown size={14} strokeWidth={3} />
                </Select>
              </GroupRow>
            </GroupColumn>
            <FieldLabel $w={103} $ml={28}>
              CALCULATE
            </FieldLabel>
            <Select $w={87}>
              Count
              <ChevronDown size={12} strokeWidth={3} />
            </Select>
            <Select $w={89} $ml={6}>
              Issues
              <ChevronDown size={12} strokeWidth={3} />
            </Select>
            <FieldLabel $w={114} $ml={31}>
              CHART TITLE
            </FieldLabel>
            <TextInput $w={731}>Issues by Assignee</TextInput>
            <AlignButton>
              <svg width="15" height="15" viewBox="0 0 15 15" fill="currentColor">
                <rect x="3" y="1" width="9" height="3" rx="1" />
                <rect x="0" y="6" width="15" height="2" />
                <rect x="3" y="10" width="9" height="4" rx="1" />
              </svg>
              <ChevronDown size={12} strokeWidth={3} />
            </AlignButton>
          </BuilderRow>
          <Preview>
            <PreviewTop>
              <PreviewTab>Live Preview</PreviewTab>
              <ChartHeading>Issues by Assignee</ChartHeading>
              <MoonIcon viewBox="0 0 26 26" fill="none">
                <circle cx="13" cy="13" r="11" stroke="#1c2a58" strokeWidth="2.5" />
                <circle cx="15" cy="10" r="7" fill={INK} />
              </MoonIcon>
              <CollapseLeft>
                <ChevronsLeft size={15} strokeWidth={3.5} />
              </CollapseLeft>
            </PreviewTop>
            <PreviewBody>
              <ChartColumn>
                <StackedBars />
                <TotalLine>
                  Total: <b>139</b>
                </TotalLine>
              </ChartColumn>
              <Table>
                <TableHead>
                  <NumCell>#</NumCell>
                  <NameCell>Status</NameCell>
                  <IssuesHead>Issues</IssuesHead>
                </TableHead>
                {statusRows.map((row) => (
                  <TableRow key={row.n} {...row} />
                ))}
                <SwatchCell>
                  <MoreChevron size={30} strokeWidth={4} />
                </SwatchCell>
                <NumCell>6 - 8</NumCell>
                <ShowMore>Show more...</ShowMore>
                <CountCell>10</CountCell>
                <TableEnd />
              </Table>
            </PreviewBody>
            <BottomTabs>
              <BottomTab $left>
                Documentation
                <ExternalLink size={17} strokeWidth={2.4} />
              </BottomTab>
              <BottomTab>
                <Megaphone size={18} strokeWidth={2.5} fill="#263159" />
                Get Help
              </BottomTab>
            </BottomTabs>
          </Preview>
          <Footer>
            <TemplateButton>Save current chart as template</TemplateButton>
            <SaveButton>Save</SaveButton>
            <CancelButton>Cancel</CancelButton>
          </Footer>
          <Popup>
            <PopupInner>
              <TabBar>
                <ActiveTab>
                  <BarsGlyph color="#0b3bb8" />
                  Chart By
                </ActiveTab>
                <StackIcon />
                <TabIcon $ml={20}>
                  <svg width="22" height="18" viewBox="0 0 22 18">
                    <rect x="1" y="1" width="20" height="16" rx="2.5" fill="#161d38" />
                    <path d="M3 7H19M3 12H19M8 4V15M14 4V15" stroke="#fff" strokeWidth="1.6" />
                  </svg>
                </TabIcon>
                <TabIcon $ml={13}>
                  <MessageSquareText size={21} strokeWidth={2.3} />
                </TabIcon>
                <TabIcon $ml={13}>
                  <Gear size={22} />
                </TabIcon>
                <TabIcon $ml={14}>
                  <Share size={21} strokeWidth={2.3} />
                </TabIcon>
                <TabIcon $ml={13}>
                  <svg width="22" height="20" viewBox="0 0 22 20" fill="none" stroke="currentColor" strokeWidth="2.2">
                    <path d="M1.5 2H21L8 18.5L7 9.5Z" strokeLinejoin="round" />
                  </svg>
                </TabIcon>
                <PopupCollapse>
                  <ChevronsUp size={15} strokeWidth={3} />
                </PopupCollapse>
              </TabBar>
              <PopupBody>
                <PopupContent>
                  <AxisRow>
                    <OptionLabel>X-AXIS LABEL</OptionLabel>
                    <AxisInput>Issue Type</AxisInput>
                  </AxisRow>
                  <OptionRow $top={6}>
                    <OptionLabel>ORDERING</OptionLabel>
                    <OrderSelect>
                      Big → Small
                      <ChevronDown size={13} strokeWidth={3} />
                    </OrderSelect>
                  </OptionRow>
                  <OptionRow $top={11}>
                    <OptionLabel>HIGHLIGHT EMPTY SEGMENTS</OptionLabel>
                    <Toggle>
                      <X size={14} strokeWidth={4} />
                    </Toggle>
                    <InfoDot>i</InfoDot>
                  </OptionRow>
                  <OptionRow $top={18}>
                    <OptionLabel>SHOW ZERO COUNTS</OptionLabel>
                    <Toggle>
                      <X size={14} strokeWidth={4} />
                    </Toggle>
                    <InfoDot>i</InfoDot>
                  </OptionRow>
                  {itemNames.map((name, i) => (
                    <ItemRow key={name} $top={i ? 16 : 14}>
                      <DragHandle>
                        {Array.from({ length: 6 }).map((_, d) => (
                          <span key={d} />
                        ))}
                      </DragHandle>
                      <ItemBox>
                        <span>{name}</span>
                        <Pencil size={19} strokeWidth={2} />
                        <Plus size={22} strokeWidth={2.8} />
                      </ItemBox>
                      <ItemActions>
                        <CheckDot $d={16} $bg="#0a6a12">
                          <WhiteCheck />
                        </CheckDot>
                        <EyeDot />
                      </ItemActions>
                    </ItemRow>
                  ))}
                </PopupContent>
                <ScrollArea>
                  <ScrollThumb />
                </ScrollArea>
              </PopupBody>
              <AdminBadge>
                <Gear size={17} />
                Admin settings
              </AdminBadge>
            </PopupInner>
          </Popup>
        </Panel>
      </Main>
      <BottomBackdrop />
      <Cursor viewBox="0 0 38 52">
        <path d="M6 3V39L14 32L20 47L27 44L20 30H32Z" fill="#0a0a0a" stroke="#fff" strokeWidth="2.5" strokeLinejoin="round" />
      </Cursor>
    </Page>
  );
};

export default App;
